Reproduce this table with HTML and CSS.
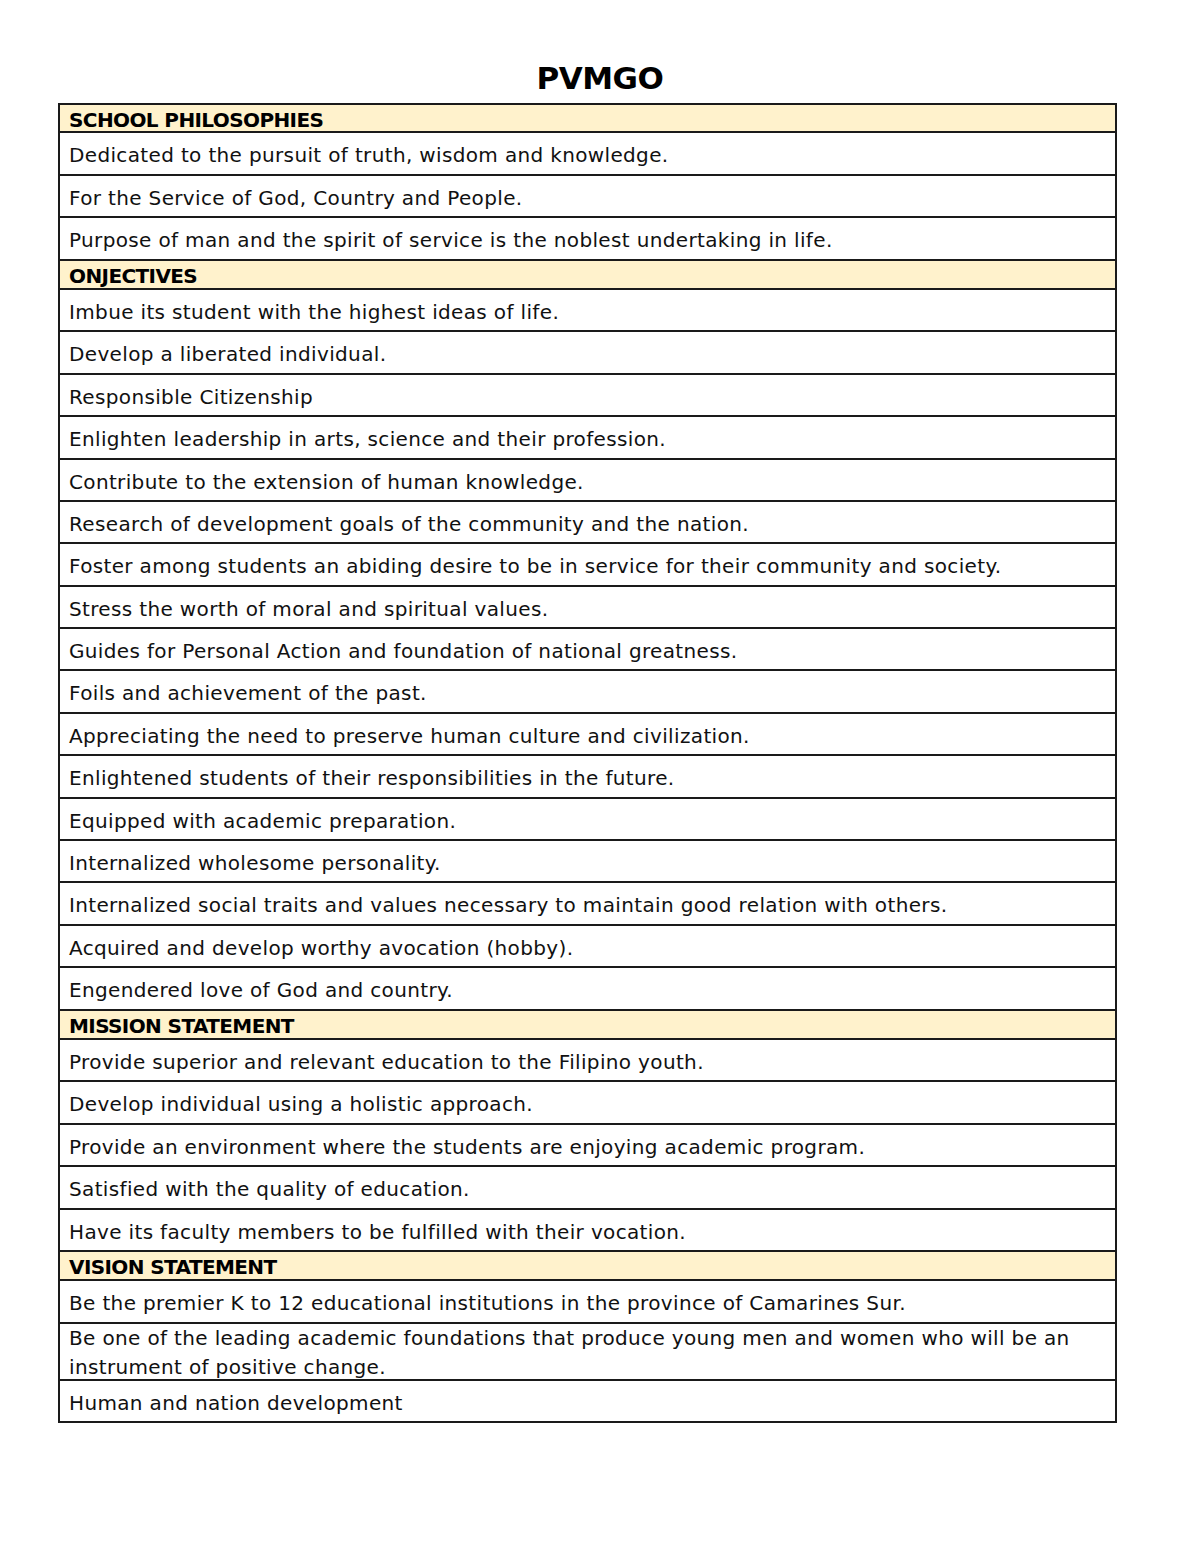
FILE: index.html
```html
<!DOCTYPE html>
<html>
<head>
<meta charset="utf-8">
<link rel="stylesheet" href="styles.css">
</head>
<body>
<div class="page">
  <h1 class="title">PVMGO</h1>
  <div class="sheet">
    <div class="head">SCHOOL PHILOSOPHIES</div>
    <div class="row">Dedicated to the pursuit of truth, wisdom and knowledge.</div>
    <div class="row">For the Service of God, Country and People.</div>
    <div class="row">Purpose of man and the spirit of service is the noblest undertaking in life.</div>
    <div class="head">ONJECTIVES</div>
    <div class="row">Imbue its student with the highest ideas of life.</div>
    <div class="row">Develop a liberated individual.</div>
    <div class="row">Responsible Citizenship</div>
    <div class="row">Enlighten leadership in arts, science and their profession.</div>
    <div class="row">Contribute to the extension of human knowledge.</div>
    <div class="row">Research of development goals of the community and the nation.</div>
    <div class="row">Foster among students an abiding desire to be in service for their community and society.</div>
    <div class="row">Stress the worth of moral and spiritual values.</div>
    <div class="row">Guides for Personal Action and foundation of national greatness.</div>
    <div class="row">Foils and achievement of the past.</div>
    <div class="row">Appreciating the need to preserve human culture and civilization.</div>
    <div class="row">Enlightened students of their responsibilities in the future.</div>
    <div class="row">Equipped with academic preparation.</div>
    <div class="row">Internalized wholesome personality.</div>
    <div class="row">Internalized social traits and values necessary to maintain good relation with others.</div>
    <div class="row">Acquired and develop worthy avocation (hobby).</div>
    <div class="row">Engendered love of God and country.</div>
    <div class="head">MISSION STATEMENT</div>
    <div class="row">Provide superior and relevant education to the Filipino youth.</div>
    <div class="row">Develop individual using a holistic approach.</div>
    <div class="row">Provide an environment where the students are enjoying academic program.</div>
    <div class="row">Satisfied with the quality of education.</div>
    <div class="row">Have its faculty members to be fulfilled with their vocation.</div>
    <div class="head">VISION STATEMENT</div>
    <div class="row">Be the premier K to 12 educational institutions in the province of Camarines Sur.</div>
    <div class="row tall">Be one of the leading academic foundations that produce young men and women who will be an instrument of positive change.</div>
    <div class="row last">Human and nation development</div>
  </div>
</div>
</body>
</html>
```
FILE: styles.css
```css
html, body {
  margin: 0;
  padding: 0;
  background: #ffffff;
}
body {
  font-family: "DejaVu Sans", Verdana, sans-serif;
  color: #111111;
}
.page {
  width: 1200px;
  height: 1553px;
  padding-top: 57px;
  box-sizing: border-box;
}
.title {
  margin: 0;
  height: 46px;
  text-align: center;
  font-size: 31px;
  line-height: 42px;
  font-weight: bold;
  color: #000;
  letter-spacing: -0.5px;
}
.sheet {
  margin-left: 58px;
  width: 1059px;
  border: 2px solid #1a1a1a;
  box-sizing: border-box;
}
.head {
  height: 29.4px;
  box-sizing: border-box;
  border-bottom: 2px solid #1a1a1a;
  background: #fff2cc;
  padding-left: 9px;
  padding-top: 2px;
  font-weight: bold;
  font-size: 20px;
  line-height: 26px;
  letter-spacing: -0.6px;
  color: #000;
}
.head:first-child {
  height: 28.4px;
}
.row {
  height: 42.4px;
  box-sizing: border-box;
  border-bottom: 2px solid #1a1a1a;
  padding-left: 9px;
  padding-top: 5px;
  font-size: 20px;
  line-height: 35px;
  letter-spacing: 0.35px;
  white-space: nowrap;
}
.row.tall {
  height: 57px;
  white-space: normal;
  line-height: 29px;
  padding-top: 0;
  padding-right: 30px;
}
.row.last {
  border-bottom: none;
  height: 40.4px;
}
```
